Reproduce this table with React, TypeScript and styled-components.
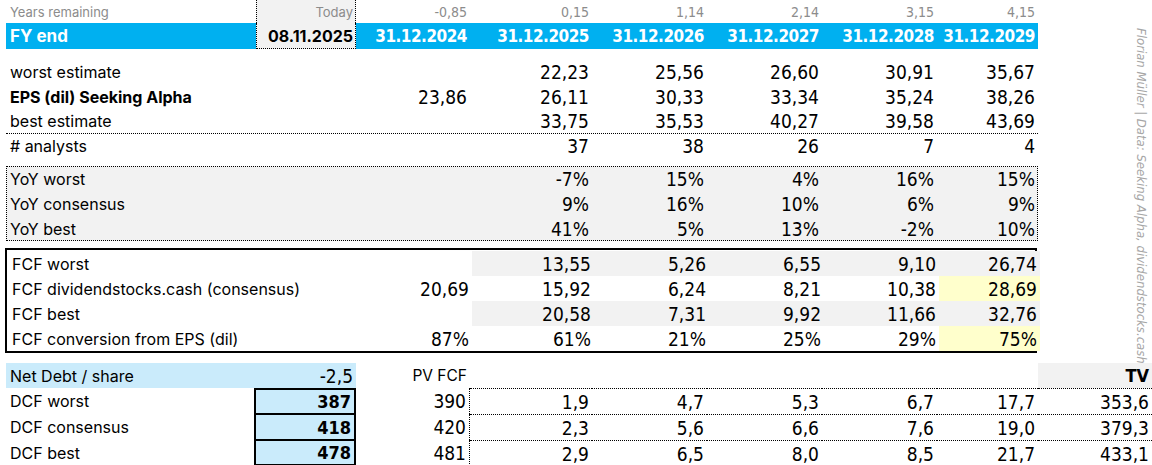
import React from 'react';
import styled, { createGlobalStyle } from 'styled-components';

const GlobalStyle = createGlobalStyle`
  html, body {
    margin: 0;
    padding: 0;
    background: #fff;
  }
`;

const LABEL_FONT = `'Inter', 'Noto Sans', sans-serif`;
const NUM_FONT = `'Liberation Sans Narrow', 'Arial Narrow', 'DejaVu Sans Condensed', 'Liberation Sans', sans-serif`;

const COLS = '250px 100px 114px 122px 115px 115px 115px 101px';
const COLS_TV = COLS + ' 114px';

const Sheet = styled.div`
  position: relative;
  width: 1152px;
  height: 465px;
  padding-left: 6px;
  box-sizing: border-box;
  overflow: hidden;
  color: #000;
`;

const Row = styled.div<{ $h?: number; $tv?: boolean; $bg?: string; $dotBottom?: boolean }>`
  display: grid;
  grid-template-columns: ${p => (p.$tv ? COLS_TV : COLS)};
  height: ${p => p.$h ?? 25}px;
  background: ${p => p.$bg ?? 'transparent'};
  border-bottom: ${p => (p.$dotBottom ? '1px dotted #000' : 'none')};
  box-sizing: border-box;
  width: ${p => (p.$tv ? 1146 : 1032)}px;
`;

const Spacer = styled.div<{ $h: number }>`
  height: ${p => p.$h}px;
`;

const Label = styled.div<{ $bold?: boolean; $white?: boolean; $size?: number; $bg?: string }>`
  display: flex;
  align-items: center;
  padding-left: 4px;
  font-family: ${LABEL_FONT};
  font-size: ${p => p.$size ?? 16}px;
  font-weight: ${p => (p.$bold ? 700 : 400)};
  color: ${p => (p.$white ? '#fff' : '#000')};
  background: ${p => p.$bg ?? 'transparent'};
  white-space: nowrap;
`;

const Num = styled.div<{ $bold?: boolean; $bg?: string; $white?: boolean; $size?: number }>`
  display: flex;
  align-items: center;
  justify-content: flex-end;
  padding-right: 3px;
  font-family: ${NUM_FONT};
  font-size: ${p => p.$size ?? 19}px;
  font-weight: ${p => (p.$bold ? 700 : 400)};
  color: ${p => (p.$white ? '#fff' : '#000')};
  background: ${p => p.$bg ?? 'transparent'};
  white-space: nowrap;
`;

const DateCell = styled(Num)`
  font-size: 17px;
  letter-spacing: -0.5px;
  font-weight: 700;
  color: #fff;
`;

const SmallGray = styled.div`
  display: flex;
  align-items: flex-end;
  justify-content: flex-end;
  padding: 0 3px 3px 0;
  font-family: ${NUM_FONT};
  font-size: 14px;
  color: #8c8c8c;
`;

const SmallGrayLabel = styled(SmallGray)`
  justify-content: flex-start;
  padding-left: 4px;
  font-family: ${LABEL_FONT};
  font-size: 13px;
`;

const TodayTop = styled(SmallGray)`
  background: #f2f2f2;
  border-left: 1px dotted #000;
  border-right: 1px dotted #000;
  font-family: ${LABEL_FONT};
  font-size: 13px;
  padding-right: 2px;
`;

const TodayDate = styled(Num)`
  background: #f2f2f2;
  border: 1px dotted #000;
  border-top: none;
  padding-right: 2px;
  font-family: ${LABEL_FONT};
  font-size: 16px;
  font-weight: 700;
`;

const BlueBar = styled(Row)`
  background: #00b0f0;
`;

const DottedBox = styled.div`
  width: 1032px;
  background: #f2f2f2;
  outline: 1px dotted #000;
  outline-offset: -1px;
`;

const SolidBox = styled.div`
  width: 1032px;
  border: 2px solid #000;
  box-sizing: border-box;
  margin-left: -1px;
  padding: 1px 0 0 1px;
`;

const LightBlue = '#caebfb';

const DcfCell = styled(Num)<{ $first?: boolean; $last?: boolean }>`
  background: ${LightBlue};
  border: 2px solid #000;
  border-top-width: ${p => (p.$first ? 2 : 1)}px;
  border-bottom-width: ${p => (p.$last ? 2 : 1)}px;
  margin-left: -2px;
  font-weight: 700;
  font-size: 18px;
`;

const PvLabel = styled(Num)<{ $dotRight?: boolean }>`
  border-right: ${p => (p.$dotRight ? '1px dotted #000' : 'none')};
`;

const PvHeader = styled(PvLabel)`
  font-family: ${LABEL_FONT};
  font-size: 15.5px;
`;

const PvCell = styled(Num)`
  border-top: 1px dotted #000;
`;

const TvHead = styled(Num)`
  background: #f2f2f2;
  font-weight: 700;
  font-size: 18px;
`;

const Credit = styled.div`
  position: absolute;
  right: 3px;
  top: 28px;
  writing-mode: vertical-rl;
  font-family: ${NUM_FONT};
  font-style: italic;
  font-size: 13px;
  color: #a6a6a6;
  white-space: nowrap;
`;

const years = ['-0,85', '0,15', '1,14', '2,14', '3,15', '4,15'];
const fyEnd = ['31.12.2024', '31.12.2025', '31.12.2026', '31.12.2027', '31.12.2028', '31.12.2029'];

type DataRow = { label: string; bold?: boolean; values: string[]; dotBottom?: boolean };

const epsRows: DataRow[] = [
  { label: 'worst estimate', values: ['', '22,23', '25,56', '26,60', '30,91', '35,67'] },
  { label: 'EPS (dil) Seeking Alpha', bold: true, values: ['23,86', '26,11', '30,33', '33,34', '35,24', '38,26'] },
  { label: 'best estimate', values: ['', '33,75', '35,53', '40,27', '39,58', '43,69'], dotBottom: true },
  { label: '# analysts', values: ['', '37', '38', '26', '7', '4'] },
];

const yoyRows: DataRow[] = [
  { label: 'YoY worst', values: ['', '-7%', '15%', '4%', '16%', '15%'] },
  { label: 'YoY consensus', values: ['', '9%', '16%', '10%', '6%', '9%'] },
  { label: 'YoY best', values: ['', '41%', '5%', '13%', '-2%', '10%'] },
];

const fcfRows: (DataRow & { shaded?: boolean; highlight?: boolean })[] = [
  { label: 'FCF worst', values: ['', '13,55', '5,26', '6,55', '9,10', '26,74'], shaded: true },
  { label: 'FCF dividendstocks.cash (consensus)', values: ['20,69', '15,92', '6,24', '8,21', '10,38', '28,69'], highlight: true },
  { label: 'FCF best', values: ['', '20,58', '7,31', '9,92', '11,66', '32,76'], shaded: true },
  { label: 'FCF conversion from EPS (dil)', values: ['87%', '61%', '21%', '25%', '29%', '75%'], highlight: true },
];

const dcfRows = [
  { label: 'DCF worst', dcf: '387', pv: '390', values: ['1,9', '4,7', '5,3', '6,7', '17,7', '353,6'] },
  { label: 'DCF consensus', dcf: '418', pv: '420', values: ['2,3', '5,6', '6,6', '7,6', '19,0', '379,3'] },
  { label: 'DCF best', dcf: '478', pv: '481', values: ['2,9', '6,5', '8,0', '8,5', '21,7', '433,1'] },
];

const FcfRow = styled(Row)`
  width: 1028px;
`;

const App: React.FC = () => {
  return (
    <>
      <GlobalStyle />
      <Sheet>
        <Row $h={23}>
          <SmallGrayLabel>Years remaining</SmallGrayLabel>
          <TodayTop>Today</TodayTop>
          {years.map(y => (
            <SmallGray key={y}>{y}</SmallGray>
          ))}
        </Row>
        <BlueBar $h={26}>
          <Label $bold $white $size={17}>FY end</Label>
          <TodayDate>08.11.2025</TodayDate>
          {fyEnd.map(d => (
            <DateCell key={d}>{d}</DateCell>
          ))}
        </BlueBar>

        <Spacer $h={11} />
        {epsRows.map(r => (
          <Row key={r.label} $h={24.5} $dotBottom={r.dotBottom}>
            <Label $bold={r.bold}>{r.label}</Label>
            <Num />
            {r.values.map((v, i) => (
              <Num key={i}>{v}</Num>
            ))}
          </Row>
        ))}

        <Spacer $h={8} />
        <DottedBox>
          {yoyRows.map(r => (
            <Row key={r.label} $h={25}>
              <Label>{r.label}</Label>
              <Num />
              {r.values.map((v, i) => (
                <Num key={i}>{v}</Num>
              ))}
            </Row>
          ))}
        </DottedBox>

        <Spacer $h={7} />
        <SolidBox>
          {fcfRows.map(r => (
            <FcfRow key={r.label} $h={25}>
              <Label>{r.label}</Label>
              <Num />
              {r.values.map((v, i) => (
                <Num
                  key={i}
                  $bg={
                    i === 5 && r.highlight
                      ? '#ffffcc'
                      : i > 0 && r.shaded
                      ? '#f2f2f2'
                      : undefined
                  }
                >
                  {v}
                </Num>
              ))}
            </FcfRow>
          ))}
        </SolidBox>

        <Spacer $h={10} />
        <Row $tv $h={25}>
          <Label $bg={LightBlue}>Net Debt / share</Label>
          <Num $bg={LightBlue}>-2,5</Num>
          <PvHeader>PV FCF</PvHeader>
          <Num />
          <Num />
          <Num />
          <Num />
          <Num />
          <TvHead>TV</TvHead>
        </Row>
        {dcfRows.map((r, idx) => (
          <Row key={r.label} $tv $h={26}>
            <Label>{r.label}</Label>
            <DcfCell $first={idx === 0} $last={idx === dcfRows.length - 1}>
              {r.dcf}
            </DcfCell>
            <PvLabel $dotRight>{r.pv}</PvLabel>
            {r.values.map((v, i) => (
              <PvCell key={i}>{v}</PvCell>
            ))}
          </Row>
        ))}

        <Credit>Florian Müller | Data: Seeking Alpha, dividendstocks.cash</Credit>
      </Sheet>
    </>
  );
};

export default App;
